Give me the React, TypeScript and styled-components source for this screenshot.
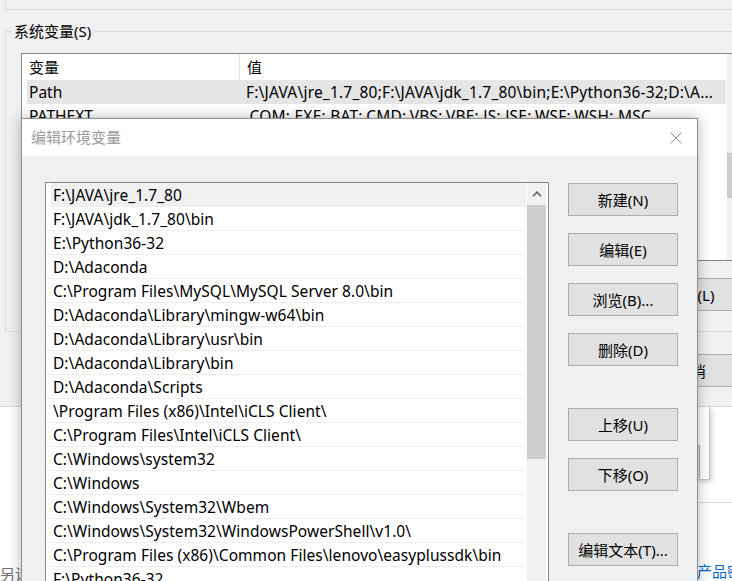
import React from "react";
import styled, { createGlobalStyle } from "styled-components";

const GlobalStyle = createGlobalStyle`
  html, body {
    margin: 0;
    padding: 0;
    background: #fff;
  }
  body {
    font-family: "Noto Sans", "Noto Sans CJK SC", sans-serif;
    font-size: 15px;
    color: #000;
  }
  * {
    box-sizing: border-box;
  }
`;

const Desktop = styled.div`
  position: relative;
  width: 732px;
  height: 581px;
  overflow: hidden;
  background: #fff;
`;

/* background window: 环境变量 */
const EnvWindow = styled.div`
  height: 407px;
  background: #f0f0f0;
  padding-left: 5px;
  border-bottom: 1px solid #d9d9d9;
`;

const UserGroupTail = styled.div`
  width: 760px;
  height: 10px;
  border-left: 1px solid #dcdcdc;
  border-bottom: 1px solid #dcdcdc;
`;

const Group = styled.fieldset`
  width: 760px;
  min-width: 0;
  margin: 11px 0 0;
  padding: 12px 0 20px 15px;
  border: 1px solid #dcdcdc;
`;

const GroupLabel = styled.legend`
  margin-left: -9px;
  padding: 0 2px;
  line-height: 20px;
`;

const ListView = styled.div`
  display: flex;
  width: 760px;
  height: 208px;
  border: 1px solid #828790;
  background: #fff;
`;

const ListMain = styled.div`
  width: 705px;
  display: flex;
  flex-direction: column;
`;

const HeaderRow = styled.div`
  display: flex;
  height: 26px;
`;

const HeaderCell = styled.div<{ $width?: number }>`
  width: ${(p) => (p.$width ? `${p.$width}px` : "auto")};
  flex: ${(p) => (p.$width ? "none" : "1")};
  padding-left: 7px;
  line-height: 27px;
  border-right: ${(p) => (p.$width ? "1px solid #e5e5e5" : "none")};
`;

const VarRow = styled.div<{ $selected?: boolean }>`
  display: flex;
  height: 24px;
  margin: 0 1px 0 5px;
  line-height: 25px;
  background: ${(p) => (p.$selected ? "#e5e5e5" : "transparent")};
  white-space: nowrap;
`;

const VarName = styled.div`
  width: 212px;
  padding-left: 2px;
  font-size: 15.5px;
`;

const VarValue = styled.div`
  flex: 1;
  padding-left: 7px;
  overflow: hidden;
  font-size: 15.5px;
  letter-spacing: 0.2px;
`;

const BgScroll = styled.div`
  width: 19px;
  background: #f0f0f0;
`;

const Thumb = styled.div<{ $top: number; $height: number }>`
  margin-top: ${(p) => p.$top}px;
  height: ${(p) => p.$height}px;
  background: #cdcdcd;
`;

const WinButtonRow = styled.div<{ $pad: number; $top: number }>`
  display: flex;
  gap: 10px;
  margin-top: ${(p) => p.$top}px;
  padding-left: ${(p) => p.$pad}px;
`;

const WinButton = styled.button<{ $top?: number }>`
  flex: none;
  width: 110px;
  height: 33px;
  margin-top: ${(p) => p.$top ?? 0}px;
  padding: 0;
  background: #e1e1e1;
  border: 1px solid #adadad;
  font: inherit;
  font-size: 15px;
  color: #000;
  white-space: nowrap;
`;

/* what is left of the window behind */
const BehindArea = styled.div`
  display: flex;
  justify-content: space-between;
  height: 174px;
`;

const SeeAlso = styled.div`
  padding-top: 157px;
  line-height: 20px;
  color: #6d6d6d;
  white-space: nowrap;
`;

const BehindRight = styled.div`
  width: 62px;
  display: flex;
  flex-direction: column;
`;

const SubBox = styled.div`
  width: 40px;
  height: 83px;
  display: flex;
  justify-content: flex-end;
  padding: 38px 9px 0 0;
  background: #fff;
  border: 1px solid #c4c4c4;
  border-top: none;
  box-shadow: 2px 2px 5px rgba(0, 0, 0, 0.18);
`;

const SubButton = styled.div`
  width: 25px;
  height: 33px;
  background: #e1e1e1;
  border: 1px solid #adadad;
`;

const Divider = styled.div`
  margin-top: 22px;
  border-top: 1px solid #dcdcdc;
`;

const ProductLink = styled.div`
  margin-top: 58px;
  padding-left: 27px;
  line-height: 20px;
  color: #0066cc;
  white-space: nowrap;
`;

/* dialog: 编辑环境变量 */
const Dialog = styled.div`
  position: absolute;
  left: 21px;
  top: 118px;
  width: 677px;
  height: 480px;
  background: #f0f0f0;
  border: 1px solid #8f8f8f;
  box-shadow: 0 0 12px rgba(0, 0, 0, 0.3);
`;

const TitleBar = styled.div`
  height: 37px;
  display: flex;
  align-items: center;
  justify-content: space-between;
  padding: 0 15px 0 9px;
  background: #fff;
`;

const Title = styled.span`
  color: #9a9a9a;
  line-height: 20px;
  margin-top: -1px;
`;

const Body = styled.div`
  display: flex;
  align-items: flex-start;
  padding: 26px 19px 0 23px;
`;

const ListBox = styled.div`
  display: flex;
  width: 504px;
  height: 420px;
  border: 1px solid #828790;
  background: #fff;
`;

const Items = styled.div`
  width: 481px;
  display: flex;
  flex-direction: column;
`;

const Item = styled.div<{ $selected?: boolean }>`
  height: 24px;
  flex: none;
  margin: 0 1px 0 ${(p) => (p.$selected ? 5 : 1)}px;
  padding-left: ${(p) => (p.$selected ? 2 : 6)}px;
  line-height: 25px;
  font-size: 15.5px;
  letter-spacing: 0.05px;
  border-bottom: 1px solid #efefef;
  background: ${(p) => (p.$selected ? "#f0f0f0" : "transparent")};
  white-space: nowrap;
`;

const ScrollBar = styled.div`
  width: 19px;
  margin-right: 1px;
  display: flex;
  flex-direction: column;
  background: #f0f0f0;
`;

const ScrollArrow = styled.div`
  height: 22px;
  display: flex;
  align-items: center;
  justify-content: center;
`;

const ButtonColumn = styled.div`
  display: flex;
  flex-direction: column;
  margin-left: 19px;
`;

const paths = [
  "F:\\JAVA\\jre_1.7_80",
  "F:\\JAVA\\jdk_1.7_80\\bin",
  "E:\\Python36-32",
  "D:\\Adaconda",
  "C:\\Program Files\\MySQL\\MySQL Server 8.0\\bin",
  "D:\\Adaconda\\Library\\mingw-w64\\bin",
  "D:\\Adaconda\\Library\\usr\\bin",
  "D:\\Adaconda\\Library\\bin",
  "D:\\Adaconda\\Scripts",
  "\\Program Files (x86)\\Intel\\iCLS Client\\",
  "C:\\Program Files\\Intel\\iCLS Client\\",
  "C:\\Windows\\system32",
  "C:\\Windows",
  "C:\\Windows\\System32\\Wbem",
  "C:\\Windows\\System32\\WindowsPowerShell\\v1.0\\",
  "C:\\Program Files (x86)\\Common Files\\lenovo\\easyplussdk\\bin",
  "F:\\Python36-32",
];

const buttons = [
  { label: "新建(N)", top: 1 },
  { label: "编辑(E)", top: 17 },
  { label: "浏览(B)...", top: 17 },
  { label: "删除(D)", top: 17 },
  { label: "上移(U)", top: 42 },
  { label: "下移(O)", top: 17 },
  { label: "编辑文本(T)...", top: 42 },
];

function CloseIcon() {
  return (
    <svg width="12" height="12" viewBox="0 0 12 12">
      <path d="M0.5 0.5 L11.5 11.5 M11.5 0.5 L0.5 11.5" stroke="#8a8a8a" strokeWidth="1" fill="none" />
    </svg>
  );
}

function ChevronUp() {
  return (
    <svg width="10" height="6" viewBox="0 0 10 6">
      <polyline points="1,5.2 5,1.2 9,5.2" stroke="#606060" strokeWidth="1.6" fill="none" />
    </svg>
  );
}

export default function App() {
  return (
    <Desktop>
      <GlobalStyle />
      <EnvWindow>
        <UserGroupTail />
        <Group>
          <GroupLabel>系统变量(S)</GroupLabel>
          <ListView>
            <ListMain>
              <HeaderRow>
                <HeaderCell $width={218}>变量</HeaderCell>
                <HeaderCell>值</HeaderCell>
              </HeaderRow>
              <VarRow $selected>
                <VarName>Path</VarName>
                <VarValue>F:\JAVA\jre_1.7_80;F:\JAVA\jdk_1.7_80\bin;E:\Python36-32;D:\A...</VarValue>
              </VarRow>
              <VarRow>
                <VarName>PATHEXT</VarName>
                <VarValue>.COM;.EXE;.BAT;.CMD;.VBS;.VBE;.JS;.JSE;.WSF;.WSH;.MSC</VarValue>
              </VarRow>
            </ListMain>
            <BgScroll>
              <Thumb $top={99} $height={45} />
            </BgScroll>
          </ListView>
          <WinButtonRow $pad={375} $top={17}>
            <WinButton>新建(W)...</WinButton>
            <WinButton>编辑(I)...</WinButton>
            <WinButton>删除(L)</WinButton>
          </WinButtonRow>
        </Group>
        <WinButtonRow $pad={511} $top={22}>
          <WinButton>确定</WinButton>
          <WinButton>取消</WinButton>
        </WinButtonRow>
      </EnvWindow>
      <BehindArea>
        <SeeAlso>另请参阅</SeeAlso>
        <BehindRight>
          <SubBox>
            <SubButton />
          </SubBox>
          <Divider />
          <ProductLink>产品密钥</ProductLink>
        </BehindRight>
      </BehindArea>

      <Dialog>
        <TitleBar>
          <Title>编辑环境变量</Title>
          <CloseIcon />
        </TitleBar>
        <Body>
          <ListBox>
            <Items>
              {paths.map((p, i) => (
                <Item key={i} $selected={i === 0}>
                  {p}
                </Item>
              ))}
            </Items>
            <ScrollBar>
              <ScrollArrow>
                <ChevronUp />
              </ScrollArrow>
              <Thumb $top={0} $height={254} />
            </ScrollBar>
          </ListBox>
          <ButtonColumn>
            {buttons.map((b) => (
              <WinButton key={b.label} $top={b.top}>
                {b.label}
              </WinButton>
            ))}
          </ButtonColumn>
        </Body>
      </Dialog>
    </Desktop>
  );
}
